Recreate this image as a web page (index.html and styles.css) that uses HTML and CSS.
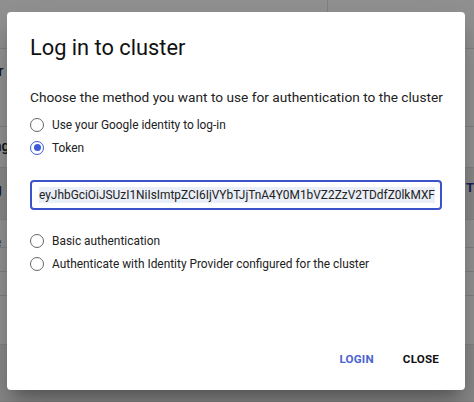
FILE: index.html
```html
<!DOCTYPE html>
<html lang="en">

<head>
  <meta charset="UTF-8">
  <meta name="viewport" content="width=device-width, initial-scale=1.0">
  <title>Log in to cluster</title>
  <link rel="stylesheet" href="styles.css">
</head>

<body>
  <div class="page">
    <div class="topbar"><div class="topbar-left"></div><div class="topbar-right"></div></div>
    <div class="row r1"><span class="frag">rr</span></div>
    <div class="row r2"><span class="frag bold">ag</span></div>
    <div class="row r3 dark"><span class="frag">g</span><span class="frag-right">TI</span></div>
    <div class="row r4"><span class="frag light">e</span></div>
    <div class="row r5"></div>
    <div class="row r6"><span class="frag">-</span></div>
    <div class="row r7"></div>
    <div class="row r8 dark"></div>
  </div>
  <div class="overlay"></div>

  <div class="dialog">
    <h1 class="title">Log in to cluster</h1>
    <p class="lead">Choose the method you want to use for authentication to the cluster</p>

    <label class="option"><span class="radio"></span>Use your Google identity to log-in</label>
    <label class="option"><span class="radio checked"></span>Token</label>

    <div class="token"><span class="token-text">eyJhbGciOiJSUzI1NiIsImtpZCI6IjVYbTJjTnA4Y0M1bVZ2ZzV2TDdfZ0lkMXF</span></div>

    <label class="option"><span class="radio"></span>Basic authentication</label>
    <label class="option"><span class="radio"></span>Authenticate with Identity Provider configured for the cluster</label>

    <div class="actions">
      <button class="btn primary">LOGIN</button>
      <button class="btn">CLOSE</button>
    </div>
  </div>
</body>

</html>
```

FILE: styles.css
```css
* {
  box-sizing: border-box;
}

html,
body {
  margin: 0;
  width: 474px;
  height: 402px;
  overflow: hidden;
}

body {
  position: relative;
  font-family: Roboto, "Liberation Sans", sans-serif;
  background: #fff;
}

/* page behind the dialog */
.page {
  display: flex;
  flex-direction: column;
  height: 100%;
  background: #fff;
}

.topbar {
  display: flex;
  height: 49px;
  border-bottom: 1px solid #ddd;
  background: #f8f8f8;
}

.topbar-left {
  width: 328px;
  border-right: 1px solid #ddd;
}

.row {
  position: relative;
  border-bottom: 1px solid #e2e2e2;
  font-size: 14px;
  color: #222;
}

.row.dark {
  background: #eeeeee;
}

.r1 { height: 78px; }
.r2 { height: 41px; }
.r3 { height: 52px; }
.r4 { height: 28px; }
.r5 { height: 24px; }
.r6 { height: 24px; }
.r7 { height: 49px; }
.r8 { flex: 1; }

.frag {
  position: absolute;
  left: -6px;
  top: 13px;
}

.r1 .frag { top: 14px; }
.r2 .frag { top: 11px; }
.r4 .frag { top: 14px; }
.r6 .frag { top: 0; }

.frag.bold {
  font-weight: 500;
}

.frag.light {
  color: #777;
}

.frag-right {
  position: absolute;
  left: 466px;
  top: 12px;
  font-weight: 700;
  font-size: 13px;
  color: #2a3a8c;
}

.overlay {
  position: absolute;
  inset: 0;
  background: rgba(0, 0, 0, 0.42);
}

/* dialog */
.dialog {
  position: absolute;
  left: 7px;
  top: 12px;
  width: 458px;
  height: 378px;
  padding: 22px 23px 0 23px;
  background: #fff;
  border-radius: 4px;
  box-shadow: 0 11px 15px -7px rgba(0, 0, 0, 0.3), 0 24px 38px 3px rgba(0, 0, 0, 0.18);
  display: flex;
  flex-direction: column;
  color: #202124;
}

.title {
  margin: 0;
  font-size: 21.8px;
  font-weight: 400;
  line-height: 28px;
  color: #111;
}

.lead {
  margin: 25px 0 6px;
  font-size: 13.7px;
  line-height: 20px;
  white-space: nowrap;
  color: #222;
}

.option {
  display: flex;
  align-items: center;
  gap: 8px;
  height: 23px;
  font-size: 11.9px;
  color: #222;
}

.radio {
  width: 14px;
  height: 14px;
  border: 1.5px solid #666;
  border-radius: 50%;
  display: flex;
  align-items: center;
  justify-content: center;
  flex-shrink: 0;
}

.radio.checked {
  border-color: #3c5ad6;
}

.radio.checked::after {
  content: "";
  width: 7px;
  height: 7px;
  border-radius: 50%;
  background: #3c5ad6;
}

.token {
  margin: 21px 0 19px;
  height: 30px;
  border: 2px solid #3c52c8;
  border-radius: 4px;
  padding: 0 7px;
  display: flex;
  align-items: center;
  overflow: hidden;
  white-space: nowrap;
}

.token-text {
  font-size: 11.9px;
  line-height: 16px;
  background: #eaeef6;
  color: #222;
}

.actions {
  margin-top: auto;
  display: flex;
  justify-content: flex-end;
  gap: 13px;
  margin-right: -5px;
  padding-bottom: 16px;
}

.btn {
  border: none;
  background: none;
  padding: 8px 8px;
  font-family: Roboto, "Liberation Sans", sans-serif;
  font-size: 11.6px;
  font-weight: 700;
  letter-spacing: 0.2px;
  color: #111;
  cursor: pointer;
}

.btn.primary {
  color: #4a63d0;
}
```
